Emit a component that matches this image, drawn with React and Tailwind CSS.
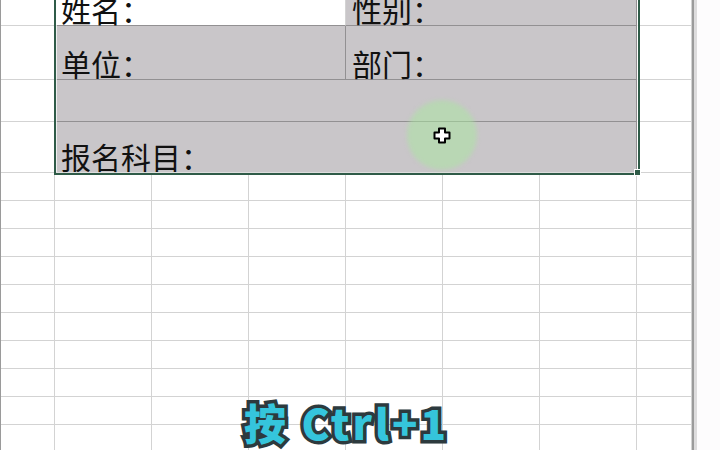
import React from "react";

const FONT = { fontFamily: '"Noto Sans CJK SC", "Noto Sans", sans-serif' };

function Cell({ w, grey, children, className = "" }) {
  return (
    <div
      className={
        "h-full shrink-0 border-r border-b flex items-end pl-[6px] pb-[1px] " +
        (grey ? "bg-[#c9c6c9] border-[#929092] " : "bg-white border-[#d3d3d3] ") +
        className
      }
      style={{ width: w }}
    >
      {children}
    </div>
  );
}

function Label({ children }) {
  return (
    <span className="text-[30px] leading-none text-[#111] whitespace-nowrap">{children}</span>
  );
}

export default function App() {
  const bottomRows = Array.from({ length: 10 });
  const plainCols = [55, 97, 97, 97, 97, 97, 97, 55];
  return (
    <div className="w-[720px] h-[450px] overflow-hidden bg-[#fdfcfd] flex" style={FONT}>
      <div className="relative w-[692px] h-full shrink-0 border-l border-[#9a9a9a] bg-white flex flex-col overflow-hidden">
        {/* Row 1 */}
        <div className="h-[26px] flex shrink-0 overflow-hidden">
          <Cell w={54} />
          <Cell w={291} className="border-b-[#929092]">
            <Label>姓名：</Label>
          </Cell>
          <Cell w={291} grey>
            <Label>性别：</Label>
          </Cell>
          <Cell w={55} />
        </div>
        {/* Row 2 */}
        <div className="h-[54px] flex shrink-0">
          <Cell w={54} />
          <Cell w={291} grey>
            <Label>单位：</Label>
          </Cell>
          <Cell w={291} grey>
            <Label>部门：</Label>
          </Cell>
          <Cell w={55} />
        </div>
        {/* Row 3 */}
        <div className="h-[42px] flex shrink-0">
          <Cell w={54} />
          <Cell w={582} grey />
          <Cell w={55} />
        </div>
        {/* Row 4 */}
        <div className="h-[51px] flex shrink-0">
          <Cell w={54} />
          <Cell w={582} grey>
            <Label>报名科目：</Label>
          </Cell>
          <Cell w={55} />
        </div>
        {/* Empty rows */}
        {bottomRows.map((_, r) => (
          <div key={r} className="h-[28px] flex shrink-0">
            {plainCols.map((w, c) => (
              <Cell key={c} w={c === 0 ? 54 : w} />
            ))}
          </div>
        ))}

        {/* Selection border */}
        <div className="absolute left-[53px] top-[-10px] w-[586px] h-[185px] border-2 border-[#2f5b48] shadow-[inset_0_0_0_1px_rgba(255,255,255,0.7)] pointer-events-none" />
        {/* Fill handle */}
        <div className="absolute left-[633px] top-[169px] w-[7px] h-[7px] bg-[#2f5b48] border border-white" />

        {/* Click highlight */}
        <div className="absolute left-[406px] top-[100px] w-[70px] h-[70px] rounded-full bg-[#a9e89f]/50 blur-[2px]" />
        {/* Cursor */}
        <svg className="absolute left-[432px] top-[127px]" width="18" height="17" viewBox="0 0 18 17">
          <path
            d="M6 1.5h6v4h4.5v6H12v4H6v-4H1.5v-6H6z"
            fill="#fff"
            stroke="#000"
            strokeWidth="2"
            strokeLinejoin="round"
          />
        </svg>

        {/* Caption */}
        <div className="absolute left-0 right-0 top-[401px] text-center">
          <span className="text-[42px] font-black leading-none tracking-[3px] text-[#35c5dc] [-webkit-text-stroke:7px_#2d3a3e] [paint-order:stroke_fill]">
            按 Ctrl+1
          </span>
        </div>
      </div>
      <div className="w-[2px] h-full bg-[#9b9b9b] shrink-0" />
      <div className="w-[3px] h-full bg-[#dddcdd] shrink-0" />
      <div className="flex-1 h-full bg-[#fdfcfd]" />
    </div>
  );
}
